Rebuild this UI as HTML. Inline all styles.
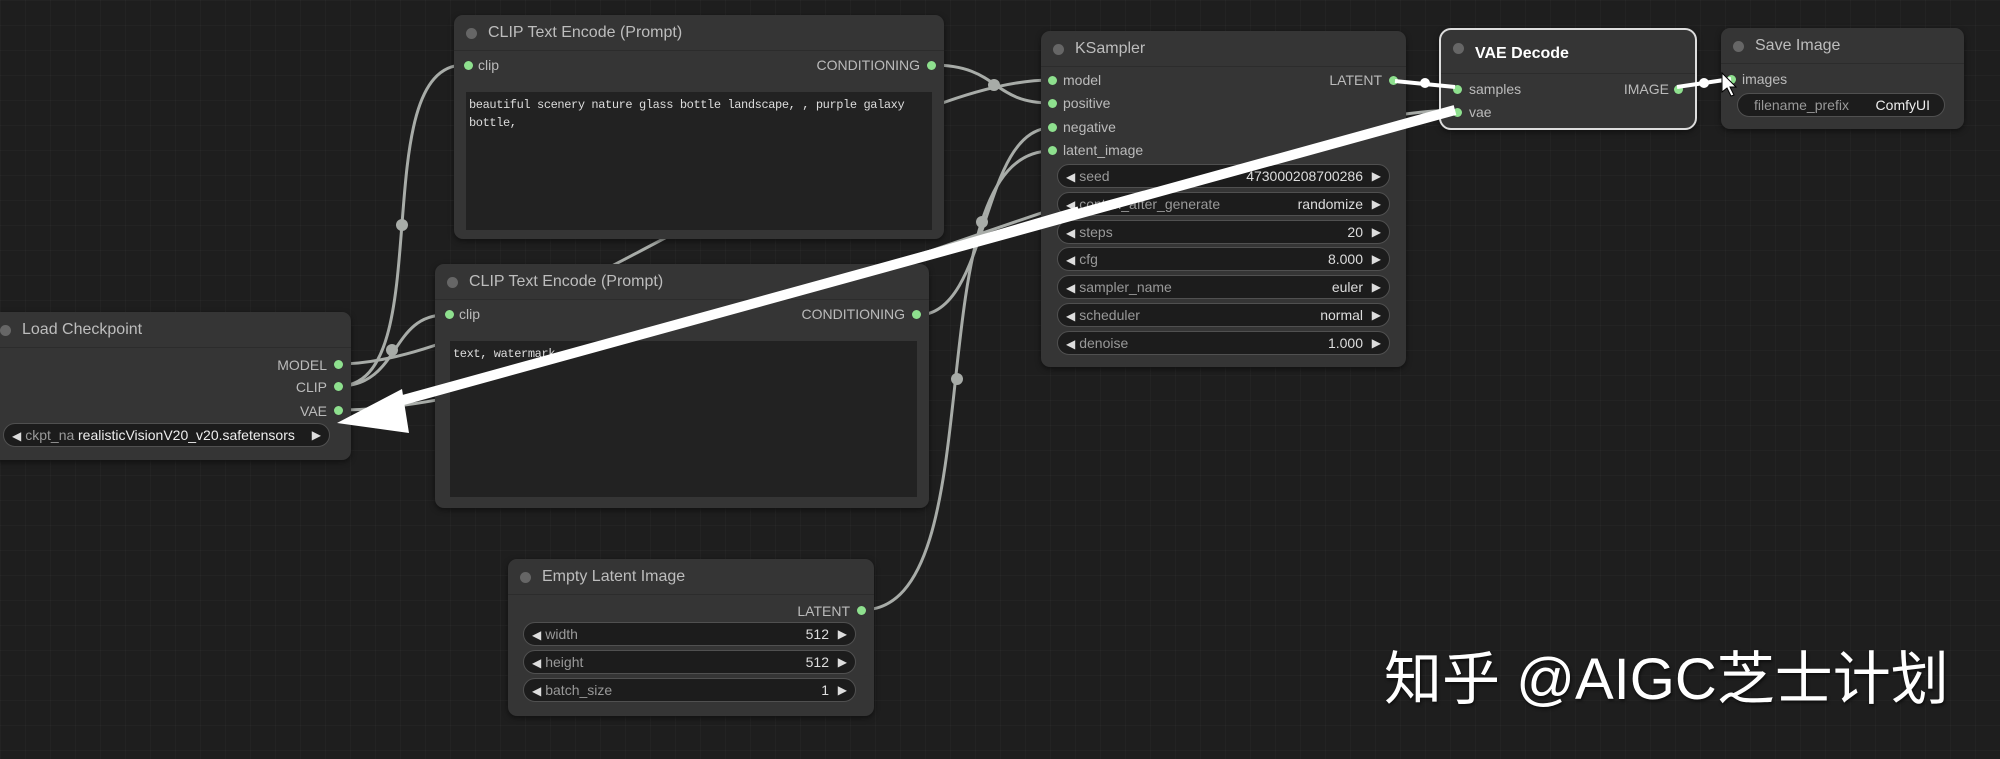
<!DOCTYPE html>
<html><head><meta charset="utf-8"><style>
*{box-sizing:border-box;margin:0;padding:0}
body{width:2000px;height:759px;overflow:hidden;background:#1e1e1e;font-family:"Liberation Sans",Arial,sans-serif;position:relative;
background-image:linear-gradient(rgba(255,255,255,0.025) 1px,transparent 1px),linear-gradient(90deg,rgba(255,255,255,0.025) 1px,transparent 1px);background-size:25px 25px}
.node{position:absolute;background:#353535;border-radius:9px;box-shadow:0 2px 6px rgba(0,0,0,.5)}
.title{position:absolute;left:0;top:0;right:0;height:36px;border-bottom:1px solid #2c2c2c;color:#bdbdbd;font-size:16px;line-height:36px;padding-left:34px}
.title:before{content:"";position:absolute;left:12px;top:13px;width:11px;height:11px;border-radius:50%;background:#666}
.slot{position:absolute;font-size:14px;color:#bbb;line-height:16px}
.dot{position:absolute;width:9px;height:9px;border-radius:50%;background:#8ee08e}
.w{position:absolute;height:24px;border-radius:12px;background:#1c1c1c;border:1px solid #505050;font-size:14px;line-height:22px;color:#999}
.w .l{position:absolute;left:8px}
.w .l:before{content:"◀";color:#ddd;font-size:12px;margin-right:4px}
.w .v{position:absolute;right:26px;color:#ddd}
.w .r{position:absolute;right:8px;color:#ddd;font-size:12px}
.ta{position:absolute;background:#222;font-family:"Liberation Mono",monospace;font-size:12px;letter-spacing:-0.4px;color:#ddd;padding:4px 3px;line-height:18px}
</style></head><body>

<svg width="2000" height="759" style="position:absolute;left:0;top:0">
<g fill="none" stroke="#a8aca8" stroke-width="3">
<path d="M339,364 C520,364 870,80 1051,80"/>
<path d="M339,386 C440,386 364,65 464,65"/>
<path d="M339,386 C400,386 390,315 445,315"/>
<path d="M932,65 C1000,65 990,103 1051,103"/>
<path d="M918,315 C990,315 980,128 1051,128"/>
<path d="M862,610 C1000,610 910,151 1051,151"/>
<path d="M339,410 C600,410 1200,115 1455,110"/>
</g>
<circle cx="402" cy="225" r="6" fill="#a8aca8"/>
<circle cx="392" cy="350" r="6" fill="#a8aca8"/>
<circle cx="957" cy="379" r="6" fill="#a8aca8"/>
<circle cx="982" cy="222" r="6" fill="#a8aca8"/>
<circle cx="994" cy="85" r="6" fill="#a8aca8"/>
</svg>

<div class="node" style="left:454px;top:15px;width:490px;height:224px">
<div class="title">CLIP Text Encode (Prompt)</div>
<div class="dot" style="left:10px;top:46px"></div><div class="slot" style="left:24px;top:42px">clip</div>
<div class="slot" style="right:24px;top:42px">CONDITIONING</div><div class="dot" style="right:8px;top:46px"></div>
<div class="ta" style="left:12px;top:77px;width:466px;height:138px">beautiful scenery nature glass bottle landscape, , purple galaxy bottle,</div>
</div>

<div class="node" style="left:435px;top:264px;width:494px;height:244px">
<div class="title">CLIP Text Encode (Prompt)</div>
<div class="dot" style="left:10px;top:46px"></div><div class="slot" style="left:24px;top:42px">clip</div>
<div class="slot" style="right:24px;top:42px">CONDITIONING</div><div class="dot" style="right:8px;top:46px"></div>
<div class="ta" style="left:15px;top:77px;width:467px;height:156px">text, watermark</div>
</div>

<div class="node" style="left:-12px;top:312px;width:363px;height:148px">
<div class="title">Load Checkpoint</div>
<div class="slot" style="right:24px;top:45px">MODEL</div><div class="dot" style="right:8px;top:48px"></div>
<div class="slot" style="right:24px;top:67px">CLIP</div><div class="dot" style="right:8px;top:70px"></div>
<div class="slot" style="right:24px;top:91px">VAE</div><div class="dot" style="right:8px;top:94px"></div>
<div class="w" style="left:15px;top:111px;width:327px"><span class="l">ckpt_na</span><span style="position:absolute;left:74px;color:#eee">realisticVisionV20_v20.safetensors</span><span class="r">▶</span></div>
</div>

<div class="node" style="left:1041px;top:31px;width:365px;height:336px">
<div class="title">KSampler</div>
<div class="dot" style="left:7px;top:45px"></div><div class="slot" style="left:22px;top:41px">model</div>
<div class="slot" style="right:24px;top:41px">LATENT</div><div class="dot" style="right:8px;top:45px"></div>
<div class="dot" style="left:7px;top:68px"></div><div class="slot" style="left:22px;top:64px">positive</div>
<div class="dot" style="left:7px;top:92px"></div><div class="slot" style="left:22px;top:88px">negative</div>
<div class="dot" style="left:7px;top:115px"></div><div class="slot" style="left:22px;top:111px">latent_image</div>
<div class="w" style="left:16px;top:133px;width:333px"><span class="l">seed</span><span class="v">473000208700286</span><span class="r">▶</span></div>
<div class="w" style="left:16px;top:161px;width:333px"><span class="l">control_after_generate</span><span class="v">randomize</span><span class="r">▶</span></div>
<div class="w" style="left:16px;top:189px;width:333px"><span class="l">steps</span><span class="v">20</span><span class="r">▶</span></div>
<div class="w" style="left:16px;top:216px;width:333px"><span class="l">cfg</span><span class="v">8.000</span><span class="r">▶</span></div>
<div class="w" style="left:16px;top:244px;width:333px"><span class="l">sampler_name</span><span class="v">euler</span><span class="r">▶</span></div>
<div class="w" style="left:16px;top:272px;width:333px"><span class="l">scheduler</span><span class="v">normal</span><span class="r">▶</span></div>
<div class="w" style="left:16px;top:300px;width:333px"><span class="l">denoise</span><span class="v">1.000</span><span class="r">▶</span></div>
</div>

<div class="node" style="left:1439px;top:28px;width:258px;height:102px;border:2px solid #ddd;border-radius:12px">
<div class="title" style="color:#fff;font-weight:bold;height:44px;line-height:48px">VAE Decode</div>
<div class="dot" style="left:12px;top:55px"></div><div class="slot" style="left:28px;top:51px">samples</div>
<div class="slot" style="right:26px;top:51px">IMAGE</div><div class="dot" style="right:12px;top:55px"></div>
<div class="dot" style="left:12px;top:78px"></div><div class="slot" style="left:28px;top:74px">vae</div>
</div>

<div class="node" style="left:1721px;top:28px;width:243px;height:101px">
<div class="title">Save Image</div>
<div class="dot" style="left:6px;top:47px"></div><div class="slot" style="left:21px;top:43px">images</div>
<div class="w" style="left:16px;top:65px;width:208px"><span style="position:absolute;left:16px">filename_prefix</span><span style="position:absolute;right:14px;color:#eee">ComfyUI</span></div>
</div>

<div class="node" style="left:508px;top:559px;width:366px;height:157px">
<div class="title">Empty Latent Image</div>
<div class="slot" style="right:24px;top:44px">LATENT</div><div class="dot" style="right:8px;top:47px"></div>
<div class="w" style="left:15px;top:63px;width:333px"><span class="l">width</span><span class="v">512</span><span class="r">▶</span></div>
<div class="w" style="left:15px;top:91px;width:333px"><span class="l">height</span><span class="v">512</span><span class="r">▶</span></div>
<div class="w" style="left:15px;top:119px;width:333px"><span class="l">batch_size</span><span class="v">1</span><span class="r">▶</span></div>
</div>

<svg width="2000" height="759" style="position:absolute;left:0;top:0">
<g stroke="#fff" fill="none">
<path d="M1395,81 L1455,87" stroke-width="4"/>
<path d="M1677,87 L1731,79" stroke-width="4"/>
<path d="M1078,208 L893,262" stroke-width="3"/>
<path d="M1455,110 L385,405" stroke-width="10"/>
</g>
<circle cx="1425" cy="83" r="5" fill="#fff"/><circle cx="1704" cy="83" r="5" fill="#fff"/>
<polygon points="337,423 402,389 409,433" fill="#fff"/>
<polygon points="1722,73 1722,92 1727,88 1731,96 1734,95 1730,87 1736,87" fill="#fff" stroke="#000" stroke-width="1"/>
</svg>

<div style="position:absolute;left:1384px;top:632px;font-family:'Liberation Sans','Noto Sans CJK SC',sans-serif;font-size:58px;color:#fff;white-space:nowrap;text-shadow:1px 2px 3px rgba(0,0,0,.6)">知乎 @AIGC芝士计划</div>
</body></html>
